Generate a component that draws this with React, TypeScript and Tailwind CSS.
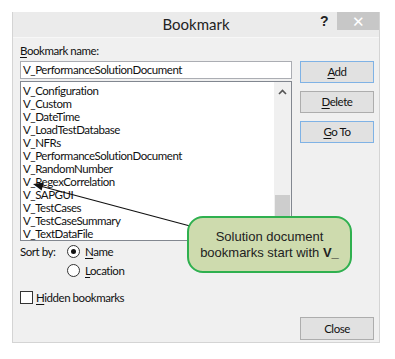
import React from "react";

const items = [
  "V_Configuration",
  "V_Custom",
  "V_DateTime",
  "V_LoadTestDatabase",
  "V_NFRs",
  "V_PerformanceSolutionDocument",
  "V_RandomNumber",
  "V_RegexCorrelation",
  "V_SAPGUI",
  "V_TestCases",
  "V_TestCaseSummary",
  "V_TextDataFile",
];

function Btn({ hot, rest, blue }: { hot: string; rest: string; blue?: boolean }) {
  return (
    <div
      className={`h-[22px] w-[74px] flex items-center justify-center bg-[#e1e1e1] border ${
        blue ? "border-[#7fb2e5]" : "border-[#adadad]"
      } text-[#111]`}
    >
      <span>
        <span className="underline underline-offset-2">{hot}</span>
        {rest}
      </span>
    </div>
  );
}

function Radio({ checked }: { checked?: boolean }) {
  return (
    <div className="w-[13px] h-[13px] rounded-full border border-[#333] bg-white flex items-center justify-center">
      {checked && <div className="w-[5px] h-[5px] rounded-full bg-[#111]" />}
    </div>
  );
}

export default function App() {
  return (
    <div className="relative w-[395px] h-[359px] bg-white pt-[12px] pl-[12px] overflow-hidden font-['Lato',sans-serif] text-[11.5px] tracking-[-0.45px] text-[#111] leading-none">
      <div className="w-[368px] h-[331px] flex flex-col border-l border-r border-b border-[#d4d4d4]">
        {/* title bar */}
        <div className="h-[26px] bg-[#ebebeb] flex border-b border-[#f7f7f7]">
          <div className="flex-1 basis-0" />
          <div className="self-center text-[15px] tracking-normal text-[#222]">Bookmark</div>
          <div className="flex-1 basis-0 flex justify-end items-start">
            <span className="mt-[2px] mr-[9px] text-[14px] font-bold font-['Liberation_Sans',sans-serif] text-[#222]">?</span>
            <div className="w-[42px] h-[18px] bg-[#c7c7c7] flex items-center justify-center text-white text-[15px] font-['Liberation_Sans',sans-serif]">
              ✕
            </div>
          </div>
        </div>

        {/* body */}
        <div className="flex-1 bg-[#f0f0f0] pl-[7px] pr-[5px] pt-[6px] flex flex-col">
          <div className="flex gap-[8px]">
            <div className="w-[272px] flex flex-col">
              <div className="h-[14px] leading-[14px]">
                <span className="underline underline-offset-2">B</span>ookmark name:
              </div>
              <div className="mt-[3px] h-[18px] border border-[#abadb3] bg-white flex items-center pl-[2px]">
                V_PerformanceSolutionDocument
              </div>
              <div className="mt-[2px] h-[160px] border border-[#828790] bg-white flex">
                <div className="flex-1 pt-[2px] pl-[2px]">
                  {items.map((it) => (
                    <div key={it} className="h-[13px] leading-[13px]">
                      {it}
                    </div>
                  ))}
                </div>
                <div className="w-[17px] bg-[#f0f0f0] flex flex-col items-center">
                  <svg width="9" height="6" viewBox="0 0 9 6" className="mt-[7px]">
                    <path d="M1 5 L4.5 1.5 L8 5" fill="none" stroke="#555" strokeWidth="1.6" />
                  </svg>
                  <div className="mt-[100px] w-[15px] h-[40px] bg-[#cdcdcd]" />
                </div>
              </div>
            </div>
            <div className="pt-[17px] flex flex-col gap-[8px]">
              <Btn hot="A" rest="dd" blue />
              <Btn hot="D" rest="elete" />
              <Btn hot="G" rest="o To" blue />
            </div>
          </div>

          {/* sort by */}
          <div className="mt-[1px] h-[19px] flex items-center">
            <span className="w-[47px]">Sort by:</span>
            <Radio checked />
            <span className="ml-[5px]">
              <span className="underline underline-offset-2">N</span>ame
            </span>
          </div>
          <div className="h-[19px] flex items-center pl-[47px]">
            <Radio />
            <span className="ml-[5px]">
              <span className="underline underline-offset-2">L</span>ocation
            </span>
          </div>

          <div className="mt-[8px] h-[19px] flex items-center">
            <div className="w-[13px] h-[13px] border border-[#333] bg-white" />
            <span className="ml-[3px]">
              <span className="underline underline-offset-2">H</span>idden bookmarks
            </span>
          </div>

          <div className="mt-[10px] flex justify-end">
            <div className="h-[23px] w-[74px] flex items-center justify-center bg-[#e1e1e1] border border-[#adadad]">
              Close
            </div>
          </div>
        </div>
      </div>

      {/* annotation arrow */}
      <svg className="absolute left-0 top-0 pointer-events-none" width="395" height="359">
        <line x1="190" y1="226" x2="42" y2="186.5" stroke="#111" strokeWidth="1.2" />
        <polygon points="33,184 43.7,182.7 41.6,190.5" fill="#111" />
      </svg>

      {/* callout */}
      <div className="absolute left-[187px] top-[216px] w-[165px] h-[57px] rounded-[16px] border-2 border-[#2fb04f] bg-[#cedbae] flex flex-col items-center justify-center font-['Liberation_Sans',sans-serif] text-[13px] tracking-normal leading-[16px] text-[#222]">
        <div>Solution document</div>
        <div>
          bookmarks start with <b>V_</b>
        </div>
      </div>
    </div>
  );
}
